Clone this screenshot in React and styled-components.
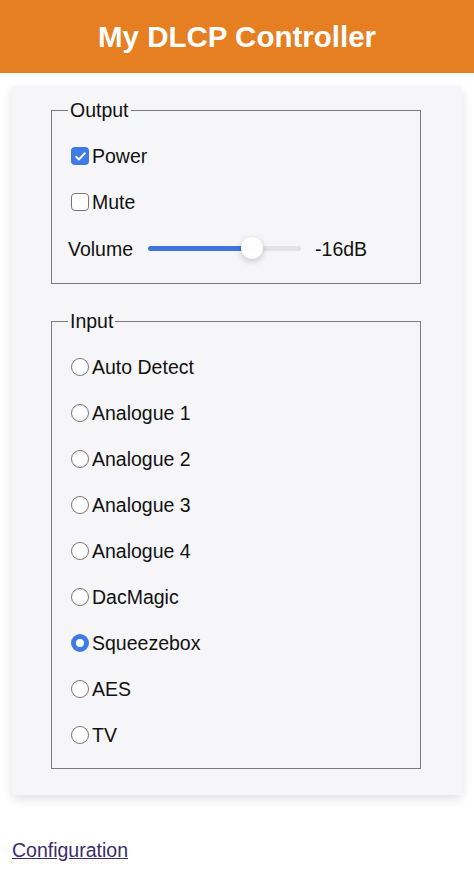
import React, { useState } from "react";
import styled, { createGlobalStyle } from "styled-components";

const GlobalStyle = createGlobalStyle`
  html, body {
    margin: 0;
    padding: 0;
    background: #ffffff;
    font-family: "Liberation Sans", Arial, sans-serif;
    color: #111;
  }
`;

const Header = styled.header`
  display: flex;
  align-items: center;
  justify-content: center;
  height: 73px;
  background: #e67e22;
  color: #fff;
  font-size: 29.5px;
  font-weight: bold;
`;

const Card = styled.main`
  margin: 13px 12px 0;
  padding: 13px 41px 26px 39px;
  background: #f6f6f8;
  box-shadow: 0 4px 10px rgba(0, 0, 0, 0.12);
  display: flex;
  flex-direction: column;
  gap: 26px;
`;

const Group = styled.fieldset`
  margin: 0;
  padding: 12px 16px ${(p) => (p.tight ? "10px" : "12px")} 16px;
  border: 1.5px solid #7c7c7c;
  display: flex;
  flex-direction: column;
`;

const Legend = styled.legend`
  padding: 0 2px;
  font-size: 19.5px;
  line-height: 22px;
`;

const Row = styled.label`
  display: flex;
  align-items: center;
  height: 46px;
  font-size: 19.5px;
  cursor: pointer;
`;

const Box = styled.span`
  box-sizing: border-box;
  width: 18px;
  height: 18px;
  margin: 0 3px 0 3px;
  border-radius: 4px;
  display: flex;
  align-items: center;
  justify-content: center;
  border: ${(p) => (p.checked ? "none" : "1.5px solid #767676")};
  background: ${(p) => (p.checked ? "#3f7be6" : "#fff")};
`;

const Radio = styled.span`
  box-sizing: border-box;
  width: 18px;
  height: 18px;
  margin: 0 3px 0 3px;
  border-radius: 50%;
  background: #fff;
  border: ${(p) => (p.checked ? "5px solid #3f7be6" : "1.5px solid #767676")};
`;

const VolumeRow = styled.div`
  display: flex;
  align-items: center;
  height: 46px;
  padding-top: 3px;
  box-sizing: border-box;
  font-size: 19.5px;
`;

const Track = styled.div`
  position: relative;
  width: 153px;
  height: 5px;
  margin: -3px 14px 0 15px;
  border-radius: 3px;
  background: #e3e3e6;
`;

const Fill = styled.div`
  height: 100%;
  border-radius: 3px;
  background: #3f74dc;
`;

const Thumb = styled.div`
  position: absolute;
  top: 50%;
  width: 22px;
  height: 22px;
  margin: -11px 0 0 -11px;
  border-radius: 50%;
  background: #fff;
  box-shadow: 0 2px 6px rgba(0, 0, 0, 0.22);
`;

const Footer = styled.div`
  padding: 44px 12px 0;
  font-size: 19.5px;
`;

const Link = styled.a`
  color: #3a2d6b;
  text-decoration: underline;
`;

const inputs = [
  "Auto Detect",
  "Analogue 1",
  "Analogue 2",
  "Analogue 3",
  "Analogue 4",
  "DacMagic",
  "Squeezebox",
  "AES",
  "TV",
];

const Check = () => (
  <svg width="13" height="13" viewBox="0 0 24 24" fill="none" stroke="#fff" strokeWidth="3.5" strokeLinecap="round" strokeLinejoin="round">
    <path d="M4 12.5l5 5L20 6" />
  </svg>
);

export default function App() {
  const [power, setPower] = useState(true);
  const [mute, setMute] = useState(false);
  const [source, setSource] = useState("Squeezebox");
  const volume = 0.68;

  return (
    <>
      <GlobalStyle />
      <Header>My DLCP Controller</Header>
      <Card>
        <Group>
          <Legend>Output</Legend>
          <Row onClick={() => setPower(!power)}>
            <Box checked={power}>{power && <Check />}</Box>
            Power
          </Row>
          <Row onClick={() => setMute(!mute)}>
            <Box checked={mute}>{mute && <Check />}</Box>
            Mute
          </Row>
          <VolumeRow>
            Volume
            <Track>
              <Fill style={{ width: `${volume * 100}%` }} />
              <Thumb style={{ left: `${volume * 100}%` }} />
            </Track>
            -16dB
          </VolumeRow>
        </Group>
        <Group tight>
          <Legend>Input</Legend>
          {inputs.map((name) => (
            <Row key={name} onClick={() => setSource(name)}>
              <Radio checked={source === name} />
              {name}
            </Row>
          ))}
        </Group>
      </Card>
      <Footer>
        <Link href="#">Configuration</Link>
      </Footer>
    </>
  );
}
